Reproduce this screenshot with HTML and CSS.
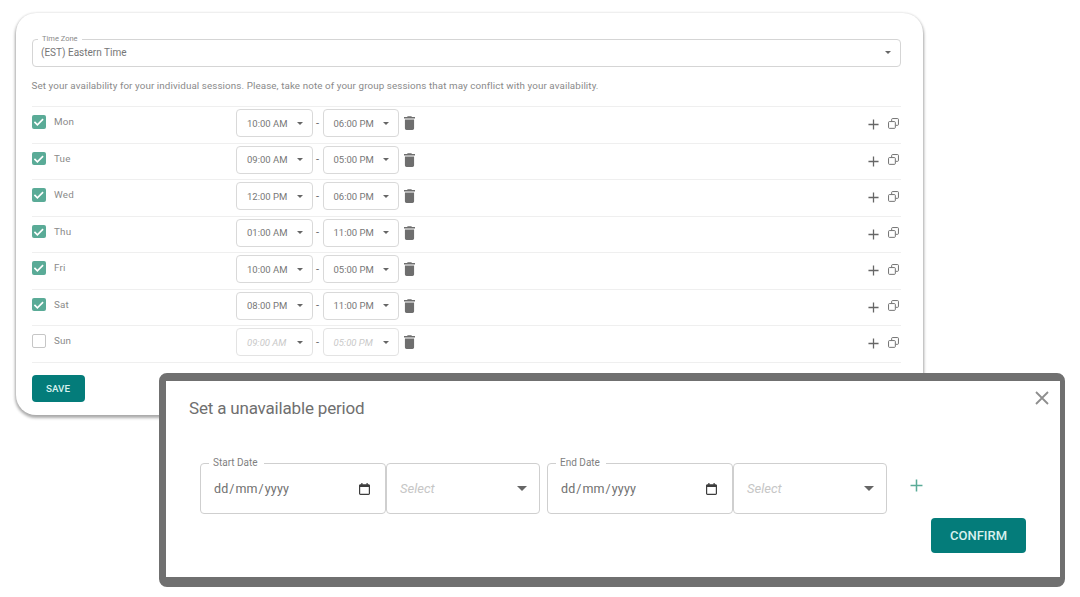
FILE: index.html
```html
<!DOCTYPE html>
<html lang="en">
<head>
<meta charset="utf-8">
<title>Availability</title>
<link rel="stylesheet" href="styles.css">
</head>
<body>
<svg class="defs" width="0" height="0" aria-hidden="true">
  <symbol id="trash" viewBox="0 0 12 15"><path d="M4 0h4l.7 1H12v1.6H0V1h3.3zM1 3.6h10v9.6c0 1-.8 1.8-1.8 1.8H2.800C1.800 15 1 14.200 1 13.200z"/></symbol>
  <symbol id="copy" viewBox="0 0 12 12"><path d="M4 3.500V1.500C4 1 4.400.6 4.900.6h5.600c.5 0 .9.4.9.9v5.600c0 .5-.4.9-.9.9H8.500M1.500 3.900h5.600c.5 0 .9.400.9.900v5.600c0 .5-.4.900-.9.900H1.500c-.5 0-.9-.4-.9-.9V4.800c0-.5.4-.9.900-.9z" fill="none" stroke="currentColor" stroke-width="1"/></symbol>
  <symbol id="plus" viewBox="0 0 12 12"><path d="M6 .5v11M.5 6h11" fill="none" stroke="currentColor" stroke-width="1.400"/></symbol>
  <symbol id="cal" viewBox="0 0 12 13"><path d="M2.500 0h1.300v1.300h4.400V0h1.300v1.300h.9c.9 0 1.600.7 1.600 1.500v8.600c0 .9-.7 1.600-1.600 1.600H1.600C.7 13 0 12.300 0 11.400V2.800c0-.8.7-1.500 1.600-1.500h.9zM1.300 4.400v7.300h9.400V4.400z"/></symbol>
  <symbol id="check" viewBox="0 0 14 14"><path d="M2.500 7.200l3.100 3.100 5.900-6" fill="none" stroke="#fff" stroke-width="1.700"/></symbol>
</svg>

<main class="card">
  <div class="field tz">
    <span class="legend">Time Zone</span>
    <span class="tz-value">(EST) Eastern Time</span>
    <span class="caret"></span>
  </div>
  <p class="note">Set your availability for your individual sessions. Please, take note of your group sessions that may conflict with your availability.</p>

  <div class="rows">
    <div class="row">
      <span class="box on"><svg><use href="#check"/></svg></span><span class="day">Mon</span>
      <div class="times"><span class="time">10:00 AM<i class="caret"></i></span><span class="dash">-</span><span class="time">06:00 PM<i class="caret"></i></span><svg class="trash"><use href="#trash"/></svg></div>
      <div class="tools"><svg class="plus"><use href="#plus"/></svg><svg class="copy"><use href="#copy"/></svg></div>
    </div>
    <div class="row">
      <span class="box on"><svg><use href="#check"/></svg></span><span class="day">Tue</span>
      <div class="times"><span class="time">09:00 AM<i class="caret"></i></span><span class="dash">-</span><span class="time">05:00 PM<i class="caret"></i></span><svg class="trash"><use href="#trash"/></svg></div>
      <div class="tools"><svg class="plus"><use href="#plus"/></svg><svg class="copy"><use href="#copy"/></svg></div>
    </div>
    <div class="row">
      <span class="box on"><svg><use href="#check"/></svg></span><span class="day">Wed</span>
      <div class="times"><span class="time">12:00 PM<i class="caret"></i></span><span class="dash">-</span><span class="time">06:00 PM<i class="caret"></i></span><svg class="trash"><use href="#trash"/></svg></div>
      <div class="tools"><svg class="plus"><use href="#plus"/></svg><svg class="copy"><use href="#copy"/></svg></div>
    </div>
    <div class="row">
      <span class="box on"><svg><use href="#check"/></svg></span><span class="day">Thu</span>
      <div class="times"><span class="time">01:00 AM<i class="caret"></i></span><span class="dash">-</span><span class="time">11:00 PM<i class="caret"></i></span><svg class="trash"><use href="#trash"/></svg></div>
      <div class="tools"><svg class="plus"><use href="#plus"/></svg><svg class="copy"><use href="#copy"/></svg></div>
    </div>
    <div class="row">
      <span class="box on"><svg><use href="#check"/></svg></span><span class="day">Fri</span>
      <div class="times"><span class="time">10:00 AM<i class="caret"></i></span><span class="dash">-</span><span class="time">05:00 PM<i class="caret"></i></span><svg class="trash"><use href="#trash"/></svg></div>
      <div class="tools"><svg class="plus"><use href="#plus"/></svg><svg class="copy"><use href="#copy"/></svg></div>
    </div>
    <div class="row">
      <span class="box on"><svg><use href="#check"/></svg></span><span class="day">Sat</span>
      <div class="times"><span class="time">08:00 PM<i class="caret"></i></span><span class="dash">-</span><span class="time">11:00 PM<i class="caret"></i></span><svg class="trash"><use href="#trash"/></svg></div>
      <div class="tools"><svg class="plus"><use href="#plus"/></svg><svg class="copy"><use href="#copy"/></svg></div>
    </div>
    <div class="row">
      <span class="box"></span><span class="day">Sun</span>
      <div class="times off"><span class="time">09:00 AM<i class="caret"></i></span><span class="dash">-</span><span class="time">05:00 PM<i class="caret"></i></span><svg class="trash"><use href="#trash"/></svg></div>
      <div class="tools"><svg class="plus"><use href="#plus"/></svg><svg class="copy"><use href="#copy"/></svg></div>
    </div>
  </div>
  <button class="btn save" type="button">SAVE</button>
</main>

<section class="modal">
  <h2 class="modal-title">Set a unavailable period</h2>
  <svg class="close" viewBox="0 0 14 14"><path d="M1 1l12 12M13 1L1 13" fill="none" stroke="currentColor" stroke-width="1.800"/></svg>
  <div class="period">
    <div class="field date"><span class="legend big">Start Date</span><span class="date-text">dd / mm / yyyy</span><svg class="cal"><use href="#cal"/></svg></div>
    <div class="field pick"><span class="placeholder">Select</span><span class="caret big"></span></div>
    <div class="field date second"><span class="legend big">End Date</span><span class="date-text">dd / mm / yyyy</span><svg class="cal"><use href="#cal"/></svg></div>
    <div class="field pick"><span class="placeholder">Select</span><span class="caret big"></span></div>
    <svg class="add"><use href="#plus"/></svg>
  </div>
  <div class="modal-foot"><button class="btn confirm" type="button">CONFIRM</button></div>
</section>
</body>
</html>
```

FILE: styles.css
```css
* { box-sizing: border-box; }
html, body { margin: 0; height: 597px; overflow: hidden; background: #fff; }
body { font-family: "Roboto", "Liberation Sans", sans-serif; color: #7c7c7c; position: relative; padding: 13px 0 0 16px; }
.defs { position: absolute; }

.card {
  width: 907px; height: 402px; padding: 26px 22px 0 15.500px;
  background: #fff; border-radius: 20px;
  box-shadow: 0 2px 3px 1px rgba(0,0,0,.32), 0 0 3px rgba(0,0,0,.06);
}

.field { position: relative; border: 1px solid #d5d5d5; border-radius: 4px; background: #fff; }
.legend {
  position: absolute; left: 5.500px; top: -6px; padding: 0 4px; background: #fff;
  font-size: 7.500px; line-height: 10px; color: #8a8a8a;
}
.caret {
  display: block; width: 0; height: 0;
  border-left: 3.500px solid transparent; border-right: 3.500px solid transparent; border-top: 3.500px solid #666;
}

.tz { height: 28px; display: flex; align-items: center; justify-content: space-between; padding: 0 9px 2px 8.500px; }
.tz-value { font-size: 10px; color: #767676; }

.note { margin: 13px 0 0; height: 26px; font-size: 9.800px; line-height: 12px; letter-spacing: .1px; color: #8a8a8a; }

.rows { border-top: 1px solid #efefef; }
.row { height: 36.500px; padding-bottom: 3px; display: flex; align-items: center; border-bottom: 1px solid #efefef; }
.box { width: 13.500px; height: 13.500px; margin: -3px 0 0 .5px; border: 1px solid #c6c6c6; border-radius: 2px; flex: none; }
.box.on { background: #5aab97; border: 0; }
.box svg { width: 13.500px; height: 13.500px; display: block; }
.day { width: 182px; margin: -3px 0 0 8.500px; font-size: 9.800px; letter-spacing: .2px; color: #8a8a8a; }

.times { display: flex; align-items: center; }
.time {
  width: 76.500px; height: 28px; padding: 0 9px 0 10px; display: flex; align-items: center; justify-content: space-between;
  border: 1px solid #d9d9d9; border-radius: 4px;
  font-size: 9.500px; color: #777;
}
.dash { width: 10px; text-align: center; font-size: 11px; color: #666; }
.trash { width: 11px; height: 14px; margin-left: 4.500px; fill: #6e6e6e; }
.off .time { color: #c9c9c9; font-style: italic; border-color: #e3e3e3; }

.tools { margin-left: auto; display: flex; align-items: center; color: #666; }
.plus { width: 11px; height: 11px; margin: 3px 9px 0 0; }
.copy { width: 11px; height: 11px; margin-right: 2px; color: #666; }

.btn {
  display: block; border: 0; border-radius: 4px; background: #047c7a; color: #d8f1ee;
  font-family: inherit; font-weight: 500;
}
.save { width: 53px; height: 27px; margin-top: 12px; font-size: 9.800px; }

.modal {
  position: absolute; left: 159px; top: 373px; width: 906px; height: 214px;
  display: flex; flex-direction: column; padding: 9px 34px 0 34px;
  background: #fff; border-style: solid; border-color: #707070; border-width: 8px 5px 10px 7px; border-radius: 8px;
}
.modal-title { margin: 8px 0 0 -11px; padding: 0; font-size: 17px; line-height: 20px; font-weight: 400; letter-spacing: -.18px; color: #6f6f6f; }
.close { position: absolute; right: 11px; top: 10px; width: 14px; height: 14px; color: #8e8e8e; }

.period { display: flex; margin-top: 45px; align-items: stretch; }
.modal .field { height: 51px; border-color: #cfcfcf; }
.legend.big { left: 8px; top: -8px; font-size: 10px; line-height: 13px; padding: 0 6px 0 4px; color: #7f7f7f; }
.date { width: 186px; display: flex; align-items: center; justify-content: space-between; padding: 0 15px 0 13px; }
.second { margin-left: 7.500px; }
.date-text { font-size: 12.500px; letter-spacing: .2px; word-spacing: -2.500px; color: #707070; }
.cal { width: 11px; height: 12px; fill: #3d3d3d; }
.pick { width: 153.500px; display: flex; align-items: center; justify-content: space-between; padding: 0 12px 0 13px; }
.placeholder { font-size: 13px; font-style: italic; color: #c6c6c6; }
.caret.big { border-left-width: 5px; border-right-width: 5px; border-top-width: 5px; }
.add { width: 13px; height: 13px; margin: 16px 0 0 23.500px; color: #5aab97; }

.modal-foot { display: flex; justify-content: flex-end; margin-top: 4px; }
.confirm { width: 95px; height: 35px; font-size: 13px; }
```
